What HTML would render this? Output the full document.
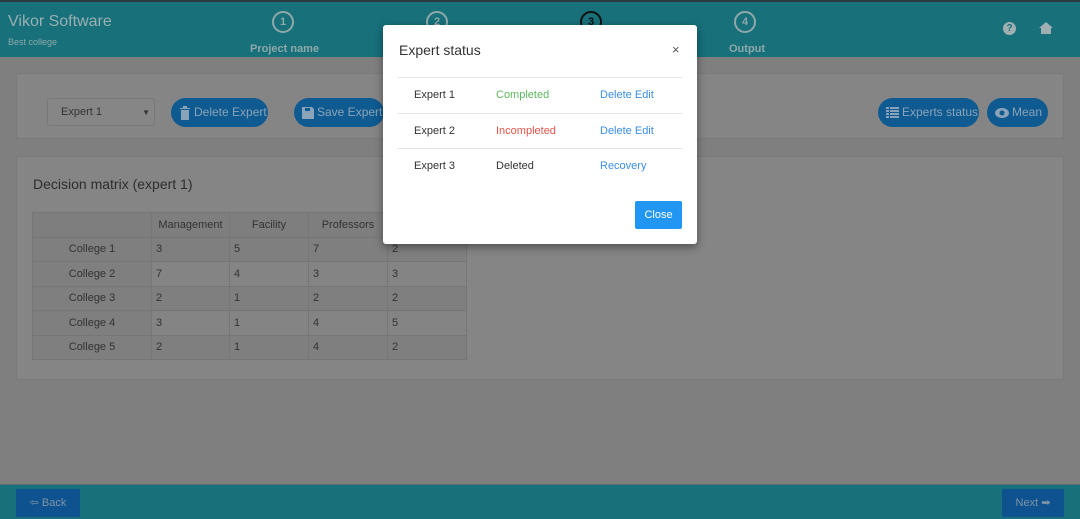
<!DOCTYPE html><html><head><style>
*{box-sizing:border-box;margin:0;padding:0}
body{width:1080px;height:519px;overflow:hidden;background:#7f7f7f;font-family:"Liberation Sans",sans-serif;position:relative}
.hdr{position:absolute;left:0;top:0;width:1080px;height:57px;background:#17707a;border-top:2px solid #2a3a3e}
.abs{position:absolute}
.step{position:absolute;width:22px;height:22px;border:2px solid #8fa8aa;border-radius:50%;color:#8fa8aa;font-size:11px;font-weight:bold;text-align:center;line-height:18px;top:9px}
.sl{position:absolute;top:41px;color:#8fa8aa;font-size:11px;font-weight:bold;white-space:nowrap}
.panel{position:absolute;background:#858585;border:1px solid #7a7a7a}
.btn{position:absolute;background:#0f5a90;color:#8aa3b8;font-size:12px;border-radius:15px;height:29px;line-height:29px;padding:0 8px;white-space:nowrap;display:flex;align-items:center;gap:3px}
.btn svg{flex:none}
table{border-collapse:collapse;position:absolute;left:32px;top:212px;font-size:11px;color:#333}
td{border:1px solid #767676;height:24.5px;padding:0 4px}
.foot{position:absolute;left:0;top:484px;width:1080px;height:35px;background:#17707a;border-top:1px solid #5a6b6b}
.fb{position:absolute;top:4px;height:28px;background:#0f5290;color:#7f94a6;font-size:11px;line-height:28px;border-radius:2px;text-align:center;white-space:nowrap}
.modal{position:absolute;left:383px;top:25px;width:314px;height:219px;background:#fff;border-radius:3px;box-shadow:0 3px 9px rgba(0,0,0,.4)}
.row{position:absolute;left:15px;width:284px;height:36px;border-top:1px solid #e5e5e5;font-size:11px;line-height:35px}
.row span{position:absolute}
</style></head><body>
<div class="hdr">
<div class="abs" style="left:8px;top:11px;color:#9ab0b2;font-size:16px">Vikor Software</div>
<div class="abs" style="left:8px;top:35px;color:#8fa8aa;font-size:9px">Best college</div>
<div class="step" style="left:272px">1</div><div class="sl" style="left:250px">Project name</div>
<div class="step" style="left:426px">2</div>
<div class="step" style="left:580px;border-color:#111;color:#111">3</div>
<div class="step" style="left:734px">4</div><div class="sl" style="left:729px">Output</div>
<div class="abs" style="left:1003px;top:20px;width:13px;height:13px;border-radius:50%;background:#a0b0b2;color:#17707a;font-size:10px;font-weight:bold;text-align:center;line-height:13px">?</div>
<svg class="abs" style="left:1039px;top:19px" width="14" height="13"><path d="M7 1L0 7h2v6h10V7h2z" fill="#a0b0b2"/></svg>
</div>
<div class="panel" style="left:16px;top:73px;width:1048px;height:66px"></div>
<div class="abs" style="left:47px;top:98px;width:108px;height:28px;border:1px solid #777;background:#868686;border-radius:3px;font-size:11px;color:#333;line-height:27px;padding-left:13px">Expert 1<span style="position:absolute;right:4px;font-size:8px">▼</span></div>
<div class="btn" style="left:171px;top:98px;width:97px"><svg width="12" height="14"><path d="M1 2h10v1H1zM4 0h4v2H4zM2 4h8v10H2z" fill="#8aa3b8"/></svg>Delete Expert</div>
<div class="btn" style="left:294px;top:98px;width:90px"><svg width="12" height="12"><path d="M0 0h10l2 2v10H0z" fill="#8aa3b8"/><rect x="3" y="1" width="5" height="3" fill="#0f5a90"/></svg> Save Expert</div>
<div class="btn" style="left:878px;top:98px;width:101px"><svg width="13" height="12"><path d="M0 0h3v2H0zM4 0h9v2H4zM0 3h3v2H0zM4 3h9v2H4zM0 6h3v2H0zM4 6h9v2H4zM0 9h3v2H0zM4 9h9v2H4z" fill="#8aa3b8"/></svg>Experts status</div>
<div class="btn" style="left:987px;top:98px;width:61px"><svg width="14" height="10"><ellipse cx="7" cy="5" rx="7" ry="5" fill="#8aa3b8"/><circle cx="7" cy="5" r="2.5" fill="#0f5a90"/></svg>Mean</div>
<div class="panel" style="left:16px;top:156px;width:1048px;height:224px"></div>
<div class="abs" style="left:33px;top:176px;font-size:14px;color:#2e2e2e">Decision matrix (expert 1)</div>
<table>
<tr style="background:#7e7e7e"><td style="width:119px"></td><td style="width:78px;text-align:center">Management</td><td style="width:79px;text-align:center">Facility</td><td style="width:79px;text-align:center">Professors</td><td style="width:79px"></td></tr>
<tr style="background:#7f7f7f"><td style="text-align:center">College 1</td><td>3</td><td>5</td><td>7</td><td>2</td></tr>
<tr style="background:#848484"><td style="text-align:center;background:#7f7f7f">College 2</td><td>7</td><td>4</td><td>3</td><td>3</td></tr>
<tr style="background:#7f7f7f"><td style="text-align:center">College 3</td><td>2</td><td>1</td><td>2</td><td>2</td></tr>
<tr style="background:#848484"><td style="text-align:center;background:#7f7f7f">College 4</td><td>3</td><td>1</td><td>4</td><td>5</td></tr>
<tr style="background:#7f7f7f"><td style="text-align:center">College 5</td><td>2</td><td>1</td><td>4</td><td>2</td></tr>
</table>
<div class="foot">
<div class="fb" style="left:16px;width:64px">⇦ Back</div>
<div class="fb" style="left:1002px;width:62px">Next ➡</div>
</div>
<div class="modal">
<div class="abs" style="left:16px;top:17px;font-size:14px;color:#333">Expert status</div>
<div class="abs" style="left:289px;top:17px;font-size:13px;color:#555">×</div>
<div class="row" style="top:52px"><span style="left:16px;color:#333">Expert 1</span><span style="left:98px;color:#5cb85c">Completed</span><span style="left:202px;color:#3a8ee6">Delete Edit</span></div>
<div class="row" style="top:88px"><span style="left:16px;color:#333">Expert 2</span><span style="left:98px;color:#e5534b">Incompleted</span><span style="left:202px;color:#3a8ee6">Delete Edit</span></div>
<div class="row" style="top:123px"><span style="left:16px;color:#333">Expert 3</span><span style="left:98px;color:#333">Deleted</span><span style="left:202px;color:#3a8ee6">Recovery</span></div>
<div class="abs" style="left:252px;top:176px;width:47px;height:28px;background:#2196f3;color:#fff;font-size:11px;text-align:center;line-height:28px;border-radius:2px">Close</div>
</div>
</body></html>
